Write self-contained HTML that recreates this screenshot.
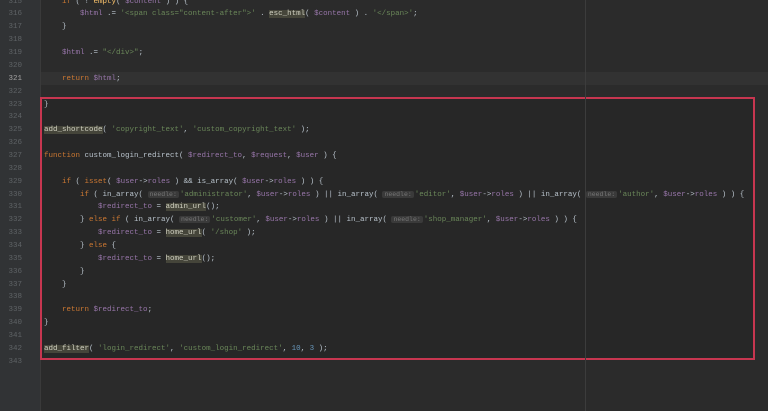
<!DOCTYPE html>
<html><head><meta charset="utf-8"><style>
body{margin:0;width:768px;height:411px;overflow:hidden;background:#2b2b2b;font-family:"Liberation Mono",monospace;font-size:7.5px;color:#b9c3cc;position:relative}
#gut{position:absolute;left:0;top:0;width:40px;height:411px;background:#313335;border-right:1px solid #3a3a3a}
.ln{position:absolute;left:0;width:22px;text-align:right;color:#5f6366;height:12.86px;line-height:12.86px}
.l{position:absolute;left:44px;white-space:pre;height:12.86px;line-height:12.86px}
.k{color:#cc7832}.v{color:#9876aa}.s{color:#6a8759}.n{color:#6897bb}
.h{background:#45453a;color:#d0d0c0}
.nd{background:#3a3a3a;color:#777;border-radius:2px;padding:0 2px;margin-right:1px;font-size:6.5px}
#cur{position:absolute;left:41px;right:0;top:71.8px;height:12.86px;background:#323232}
#box{position:absolute;left:40px;top:97px;width:711px;height:259px;border:2px solid #c73650;background:#272727}
#guide{position:absolute;left:585px;top:0;width:1px;height:411px;background:#3c3c3c}
</style></head><body>
<div id="gut"></div>
<div id="cur"></div>
<div id="box"></div>
<div id="guide"></div>
<div class="ln" style="top:-4.4px">315</div>
<div class="ln" style="top:8.46px">316</div>
<div class="ln" style="top:21.3px">317</div>
<div class="ln" style="top:34.2px">318</div>
<div class="ln" style="top:47px">319</div>
<div class="ln" style="top:59.9px">320</div>
<div class="ln" style="top:72.8px;color:#a4a3a3">321</div>
<div class="ln" style="top:85.6px">322</div>
<div class="ln" style="top:98.5px">323</div>
<div class="ln" style="top:111.3px">324</div>
<div class="ln" style="top:124.2px">325</div>
<div class="ln" style="top:137px">326</div>
<div class="ln" style="top:149.9px">327</div>
<div class="ln" style="top:162.8px">328</div>
<div class="ln" style="top:175.6px">329</div>
<div class="ln" style="top:188.5px">330</div>
<div class="ln" style="top:201.3px">331</div>
<div class="ln" style="top:214.2px">332</div>
<div class="ln" style="top:227px">333</div>
<div class="ln" style="top:239.9px">334</div>
<div class="ln" style="top:252.8px">335</div>
<div class="ln" style="top:265.6px">336</div>
<div class="ln" style="top:278.5px">337</div>
<div class="ln" style="top:291.3px">338</div>
<div class="ln" style="top:304.2px">339</div>
<div class="ln" style="top:317px">340</div>
<div class="ln" style="top:329.9px">341</div>
<div class="ln" style="top:342.8px">342</div>
<div class="ln" style="top:355.6px">343</div>

<div class="l" style="top:-4.4px">    <span class="k">if</span> ( ! <span style="color:#ffc66d">empty</span>( <span class="v">$content</span> ) ) {</div>
<div class="l" style="top:8.46px">        <span class="v">$html</span> .= <span class="s">'&lt;span class="content-after"&gt;'</span> . <span class="h">esc_html</span>( <span class="v">$content</span> ) . <span class="s">'&lt;/span&gt;'</span>;</div>
<div class="l" style="top:21.3px">    }</div>
<div class="l" style="top:47px">    <span class="v">$html</span> .= <span class="s">"&lt;/div&gt;"</span>;</div>
<div class="l" style="top:72.8px">    <span class="k">return</span> <span class="v">$html</span>;</div>
<div class="l" style="top:98.5px">}</div>
<div class="l" style="top:124.2px"><span class="h">add_shortcode</span>( <span class="s">'copyright_text'</span>, <span class="s">'custom_copyright_text'</span> );</div>
<div class="l" style="top:149.9px"><span class="k">function</span> custom_login_redirect( <span class="v">$redirect_to</span>, <span class="v">$request</span>, <span class="v">$user</span> ) {</div>
<div class="l" style="top:175.6px">    <span class="k">if</span> ( <span class="k">isset</span>( <span class="v">$user</span>-&gt;<span class="v">roles</span> ) &amp;&amp; is_array( <span class="v">$user</span>-&gt;<span class="v">roles</span> ) ) {</div>
<div class="l" style="top:188.5px">        <span class="k">if</span> ( in_array( <span class="nd">needle:</span><span class="s">'administrator'</span>, <span class="v">$user</span>-&gt;<span class="v">roles</span> ) || in_array( <span class="nd">needle:</span><span class="s">'editor'</span>, <span class="v">$user</span>-&gt;<span class="v">roles</span> ) || in_array( <span class="nd">needle:</span><span class="s">'author'</span>, <span class="v">$user</span>-&gt;<span class="v">roles</span> ) ) {</div>
<div class="l" style="top:201.3px">            <span class="v">$redirect_to</span> = <span class="h">admin_url</span>();</div>
<div class="l" style="top:214.2px">        } <span class="k">else if</span> ( in_array( <span class="nd">needle:</span><span class="s">'customer'</span>, <span class="v">$user</span>-&gt;<span class="v">roles</span> ) || in_array( <span class="nd">needle:</span><span class="s">'shop_manager'</span>, <span class="v">$user</span>-&gt;<span class="v">roles</span> ) ) {</div>
<div class="l" style="top:227px">            <span class="v">$redirect_to</span> = <span class="h">home_url</span>( <span class="s">'/shop'</span> );</div>
<div class="l" style="top:239.9px">        } <span class="k">else</span> {</div>
<div class="l" style="top:252.8px">            <span class="v">$redirect_to</span> = <span class="h">home_url</span>();</div>
<div class="l" style="top:265.6px">        }</div>
<div class="l" style="top:278.5px">    }</div>
<div class="l" style="top:304.2px">    <span class="k">return</span> <span class="v">$redirect_to</span>;</div>
<div class="l" style="top:317px">}</div>
<div class="l" style="top:342.8px"><span class="h">add_filter</span>( <span class="s">'login_redirect'</span>, <span class="s">'custom_login_redirect'</span>, <span class="n">10</span>, <span class="n">3</span> );</div>
</body></html>
